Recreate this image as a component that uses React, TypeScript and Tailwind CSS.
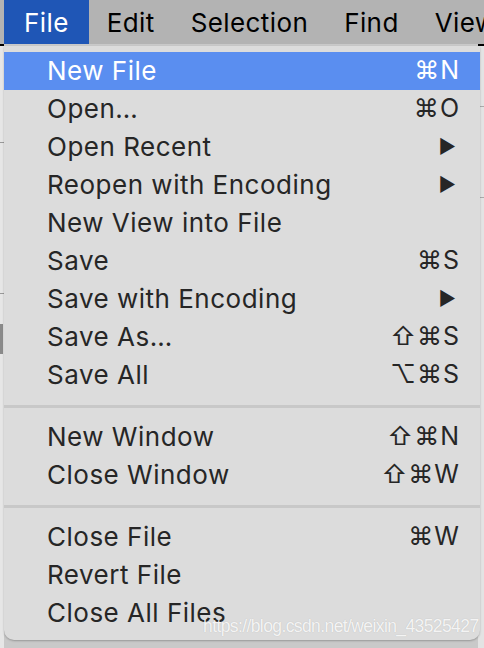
import React from "react";

type Item =
  | { kind: "item"; label: string; keys?: string; sub?: boolean; active?: boolean }
  | { kind: "sep" };

const ITEMS: Item[] = [
  { kind: "item", label: "New File", keys: "⌘N", active: true },
  { kind: "item", label: "Open…", keys: "⌘O" },
  { kind: "item", label: "Open Recent", sub: true },
  { kind: "item", label: "Reopen with Encoding", sub: true },
  { kind: "item", label: "New View into File" },
  { kind: "item", label: "Save", keys: "⌘S" },
  { kind: "item", label: "Save with Encoding", sub: true },
  { kind: "item", label: "Save As…", keys: "⇧⌘S" },
  { kind: "item", label: "Save All", keys: "⌥⌘S" },
  { kind: "sep" },
  { kind: "item", label: "New Window", keys: "⇧⌘N" },
  { kind: "item", label: "Close Window", keys: "⇧⌘W" },
  { kind: "sep" },
  { kind: "item", label: "Close File", keys: "⌘W" },
  { kind: "item", label: "Revert File" },
  { kind: "item", label: "Close All Files" },
];

const MENUBAR = ["File", "Edit", "Selection", "Find", "View"];

function Row({ item }: { item: Extract<Item, { kind: "item" }> }) {
  return (
    <div
      className={
        "flex h-[38px] items-center pl-[43px] pr-[20px] " +
        (item.active ? "bg-[#5a8ef0] text-white" : "text-[#262626]")
      }
    >
      <span className="-mt-[2px] flex-1 tracking-[0.5px]">{item.label}</span>
      {item.keys && (
        <span className="font-['Inter','DejaVu_Sans',sans-serif] text-[25px] tracking-[1px]">
          {item.keys}
        </span>
      )}
      {item.sub && <span className="mr-[4px] text-[19px]">▶</span>}
    </div>
  );
}

export default function App() {
  return (
    <div className="relative h-[648px] w-[484px] overflow-hidden bg-[#c9c9c9] font-['Inter','DejaVu_Sans',sans-serif]">
      {/* menu bar */}
      <div className="flex h-[44px] items-center overflow-hidden whitespace-nowrap bg-[#b3b3b3] text-[26px] tracking-[0.4px] text-black">
        <div className="ml-[4px] flex h-full shrink-0 items-center bg-[#1f56b6] px-[20px] text-white">
          File
        </div>
        {MENUBAR.slice(1).map((m) => (
          <div key={m} className="shrink-0 px-[18px]">
            {m}
          </div>
        ))}
      </div>
      {/* what's behind the menu */}
      <div className="flex h-[604px]">
        <div className="flex w-[4px] flex-col bg-[#e6e6e6]">
          <div className="h-[2px] bg-black" />
          <div className="mt-[96px] h-[1px] bg-[#999]" />
          <div className="mt-[150px] h-[1px] bg-[#999]" />
          <div className="mt-[30px] h-[30px] w-[3px] bg-[#8a8a8a]" />
        </div>
        <div className="flex-1" />
        <div className="flex w-[6px] flex-col bg-[#e3e3e3]">
          <div className="h-[2px] bg-black" />
          <div className="mt-[60px] h-[1px] bg-[#aaa]" />
          <div className="mt-[90px] h-[1px] bg-[#aaa]" />
        </div>
      </div>

      {/* dropdown */}
      <div className="absolute left-[4px] top-[46px] w-[476px] rounded-b-[10px] bg-[#dcdcdc] pb-[8px] pt-[6px] text-[26px] shadow-[0_1px_2px_rgba(0,0,0,0.25)]">
        {ITEMS.map((it, i) =>
          it.kind === "sep" ? (
            <div key={i} className="flex h-[24px] items-center">
              <div className="h-[3px] w-full bg-[#c8c8c8]" />
            </div>
          ) : (
            <Row key={i} item={it} />
          )
        )}
      </div>

      {/* watermark */}
      <div className="absolute left-[203px] top-[613px] whitespace-nowrap font-['Liberation_Sans',sans-serif] text-[17.5px] tracking-[-0.6px] text-white/85 [text-shadow:0_0_1px_rgba(0,0,0,0.2)]">
        https://blog.csdn.net/weixin_43525427
      </div>
    </div>
  );
}
